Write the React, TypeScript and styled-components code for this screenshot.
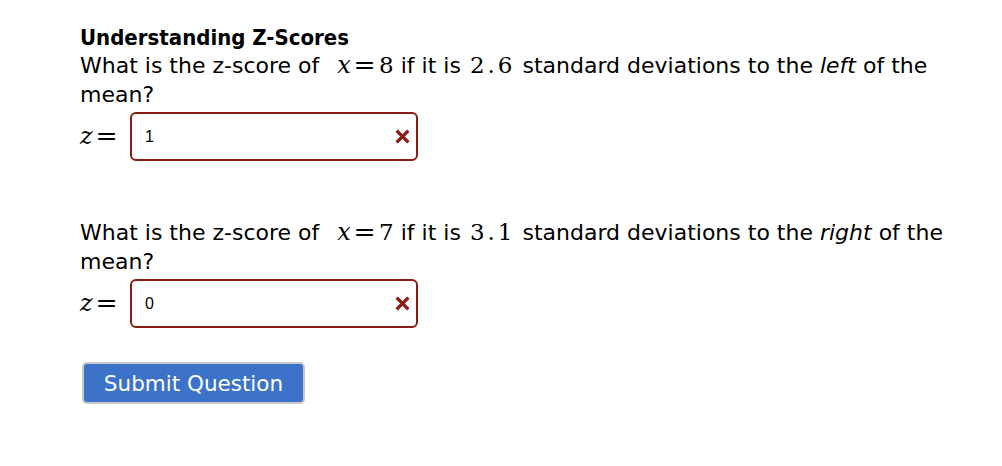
import React from "react";
import styled, { createGlobalStyle } from "styled-components";

const Global = createGlobalStyle`
  html, body { margin: 0; padding: 0; background: #fff; }
  body { font-family: "DejaVu Sans", Verdana, sans-serif; color: #000; }
`;

const Page = styled.div`
  padding: 25px 0 0 80px;
  width: 875px;
`;

const Title = styled.h1`
  margin: 0;
  font-family: "DejaVu Sans Condensed", "DejaVu Sans", sans-serif;
  font-size: 22px;
  font-weight: bold;
  line-height: 26px;
`;

const Question = styled.div<{ $gap?: number }>`
  margin-top: ${(p) => p.$gap ?? 0}px;
`;

const Prompt = styled.p`
  margin: 0;
  font-size: 22px;
  line-height: 29px;
`;

const MathExpr = styled.span<{ $left?: number; $right?: number }>`
  display: inline-block;
  margin-left: ${(p) => p.$left ?? 0}px;
  margin-right: ${(p) => p.$right ?? 0}px;
  font-family: "DejaVu Serif", serif;
  font-size: 23px;
  line-height: 29px;
`;

const MathVar = styled.span`
  font-family: "DejaVu Serif", serif;
  font-style: italic;
  font-size: 24px;
`;

const MathNum = styled.span<{ $spacing?: number }>`
  font-family: "DejaVu Serif", serif;
  letter-spacing: ${(p) => p.$spacing ?? 0}px;
`;

const MathEq = styled.span`
  display: inline-block;
  font-family: "DejaVu Sans", sans-serif;
  font-size: 23px;
  margin: 0 5px 0 4px;
  transform: scaleX(1.15);
`;

const AnswerRow = styled.div`
  display: flex;
  align-items: center;
  margin-top: 3px;
`;

const Label = styled(MathExpr)`
  width: 50px;
`;

const InputWrap = styled.div`
  width: 288px;
  height: 49px;
  box-sizing: border-box;
  border: 2px solid #8c1b14;
  border-radius: 6px;
  display: flex;
  align-items: center;
  padding: 0 5px 0 13px;
`;

const Value = styled.span`
  font-family: "Liberation Sans", Arial, sans-serif;
  font-size: 16px;
  flex: 1;
`;

const Cross = styled.svg`
  width: 17px;
  height: 17px;
`;

const Button = styled.button`
  display: block;
  margin-top: 34px;
  margin-left: 2px;
  width: 223px;
  height: 42px;
  box-sizing: border-box;
  border: 2px solid #c8c8c8;
  border-radius: 5px;
  background: #3c73c9;
  color: #fff;
  font-family: "DejaVu Sans", Verdana, sans-serif;
  font-size: 21.5px;
  padding: 0;
`;

function X() {
  return (
    <Cross viewBox="0 0 16 16">
      <path d="M2.5 2.5 L13.5 13.5 M13.5 2.5 L2.5 13.5" stroke="#8c1b14" strokeWidth="3.2" />
    </Cross>
  );
}

function Answer({ value }: { value: string }) {
  return (
    <AnswerRow>
      <Label>
        <MathVar>z</MathVar>
        <MathEq>=</MathEq>
      </Label>
      <InputWrap>
        <Value>{value}</Value>
        <X />
      </InputWrap>
    </AnswerRow>
  );
}

function Q({ x, sd, dir }: { x: string; sd: string; dir: string }) {
  return (
    <Prompt>
      What is the z-score of
      <MathExpr $left={18}>
        <MathVar>x</MathVar>
        <MathEq>=</MathEq>
        <MathNum>{x}</MathNum>
      </MathExpr>{" "}
      if it is
      <MathExpr $left={9}>
        <MathNum $spacing={3}>{sd}</MathNum>
      </MathExpr>{" "}
      standard deviations to the <em>{dir}</em> of the
      <br />
      mean?
    </Prompt>
  );
}

export default function App() {
  return (
    <>
      <Global />
      <Page>
        <Title>Understanding Z-Scores</Title>
        <Question>
          <Q x="8" sd="2.6" dir="left" />
          <Answer value="1" />
        </Question>
        <Question $gap={57}>
          <Q x="7" sd="3.1" dir="right" />
          <Answer value="0" />
        </Question>
        <Button>Submit Question</Button>
      </Page>
    </>
  );
}
